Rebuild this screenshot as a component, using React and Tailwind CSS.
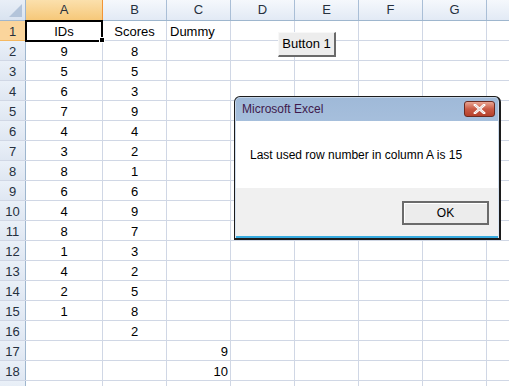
import React from "react";

const cols = [
  { key: "A", w: "w-[77px]" },
  { key: "B", w: "w-[64px]" },
  { key: "C", w: "w-[64px]" },
  { key: "D", w: "w-[64px]" },
  { key: "E", w: "w-[64px]" },
  { key: "F", w: "w-[64px]" },
  { key: "G", w: "w-[64px]" },
];

const colA = ["IDs", 9, 5, 6, 7, 4, 3, 8, 6, 4, 8, 1, 4, 2, 1, "", "", "", ""];
const colB = ["Scores", 8, 5, 3, 9, 4, 2, 1, 6, 9, 7, 3, 2, 5, 8, 2, "", "", ""];
const colC = { 1: "Dummy", 17: "9", 18: "10" };

const HeaderRow = () => (
  <div className="flex h-[21px] border-b border-[#9eb6ce]">
    <div className="relative w-[26px] shrink-0 border-r border-[#9eb6ce] bg-gradient-to-b from-[#e9eff7] to-[#d9e3f0]">
      <svg className="absolute bottom-[3px] right-[3px]" width="13" height="13" viewBox="0 0 13 13">
        <path d="M13 0 L13 13 L0 13 Z" fill="#b3c4da" />
      </svg>
    </div>
    {cols.map((c) =>
      c.key === "A" ? (
        <div
          key={c.key}
          className={`${c.w} shrink-0 flex items-center justify-center border-r border-[#f29536] bg-gradient-to-b from-[#fbe0ac] to-[#f6c879] text-[13px] text-[#25303e]`}
        >
          {c.key}
        </div>
      ) : (
        <div
          key={c.key}
          className={`${c.w} shrink-0 flex items-center justify-center border-r border-[#a9bed6] bg-gradient-to-b from-[#f5f8fc] to-[#e2eaf5] text-[13px] text-[#25303e]`}
        >
          {c.key}
        </div>
      )
    )}
    <div className="flex-1 bg-gradient-to-b from-[#f5f8fc] to-[#e2eaf5]" />
  </div>
);

const Row = ({ n }) => {
  const a = colA[n - 1];
  const b = colB[n - 1];
  const c = colC[n] || "";
  const isFirst = n === 1;
  return (
    <div className="flex h-[20px] border-b border-[#d0d7e5] text-[13px] leading-[19px] text-black">
      <div
        className={`w-[26px] shrink-0 flex items-center justify-center pt-[1px] border-r ${
          isFirst
            ? "bg-[#fad59c] border-[#f29536] -mb-[1px] border-b border-b-[#f5b860]"
            : "bg-gradient-to-b from-[#eaf0f8] to-[#dfe7f2] border-[#9eb6ce]"
        } text-[#25303e]`}
      >
        {n < 19 ? n : ""}
      </div>
      <div className="w-[77px] shrink-0 border-r border-[#d0d7e5] text-center pt-[1px]">{a}</div>
      <div className="w-[64px] shrink-0 border-r border-[#d0d7e5] text-center pt-[1px]">{b}</div>
      <div
        className={`w-[64px] shrink-0 border-r border-[#d0d7e5] pt-[1px] ${
          n === 1 ? "text-left pl-[3px]" : "text-right pr-[2px]"
        }`}
      >
        {c}
      </div>
      <div className="w-[64px] shrink-0 border-r border-[#d0d7e5]" />
      <div className="w-[64px] shrink-0 border-r border-[#d0d7e5]" />
      <div className="w-[64px] shrink-0 border-r border-[#d0d7e5]" />
      <div className="w-[64px] shrink-0 border-r border-[#d0d7e5]" />
      <div className="flex-1" />
    </div>
  );
};

const Dialog = () => (
  <div className="absolute left-[234px] top-[96px] w-[267px] h-[144px] flex flex-col rounded-t-[6px] border border-[#1c1c1c] border-r-2 border-b-2 bg-gradient-to-b from-[#9fb9d8] to-[#c7daef] shadow-[0_0_0_1px_rgba(255,255,255,0.4)_inset]">
    <div className="flex h-[24px] shrink-0 items-center justify-between pl-[7px] pr-[4px]">
      <span className="text-[12px] text-[#3f1a4c]">Microsoft Excel</span>
      <div className="flex h-[16px] w-[31px] items-center justify-center rounded-[3px] border border-[#6b2a20] bg-gradient-to-b from-[#e8a593] via-[#c95a45] to-[#b5402b]">
        <svg width="13" height="10" viewBox="0 0 13 10">
          <path d="M2 1 L11 9 M11 1 L2 9" stroke="#ffffff" strokeWidth="2.6" strokeLinecap="square" />
          <path d="M2 1 L11 9 M11 1 L2 9" stroke="#7a2b20" strokeWidth="0.6" strokeOpacity="0.4" />
        </svg>
      </div>
    </div>
    <div className="mx-[1px] flex flex-1 flex-col border-b-2 border-[#38ace0] bg-white">
      <div className="h-[67px] shrink-0 pl-[14px] pt-[27px] text-[12px] leading-[14px] text-black">
        Last used row number in column A is 15
      </div>
      <div className="flex flex-1 items-start justify-end bg-[#f0f0f0] pr-[9px] pt-[13px]">
        <div className="flex h-[24px] w-[87px] items-center justify-center border-2 border-[#6b6b6b] bg-[#ececec] text-[12px] text-black shadow-[inset_1px_1px_0_#ffffff]">
          OK
        </div>
      </div>
    </div>
  </div>
);

export default function App() {
  const rows = Array.from({ length: 19 }, (_, i) => i + 1);
  return (
    <div className="relative h-[386px] w-[509px] overflow-hidden bg-white font-['Liberation_Sans',Arial,sans-serif]">
      <HeaderRow />
      {rows.map((n) => (
        <Row key={n} n={n} />
      ))}

      {/* active cell A1 */}
      <div className="absolute left-[25px] top-[20px] h-[22px] w-[78px] border-2 border-black" />
      <div className="absolute left-[99px] top-[37px] h-[6px] w-[6px] border border-white bg-black" />

      {/* Button 1 shape */}
      <div className="absolute left-[278px] top-[32px] flex h-[25px] w-[58px] items-center justify-center border border-[#f8f8f8] border-r-2 border-b-2 border-r-[#6a6a6a] border-b-[#6a6a6a] bg-[#ededed] text-[13px] text-black">
        Button 1
      </div>

      <Dialog />
    </div>
  );
}
